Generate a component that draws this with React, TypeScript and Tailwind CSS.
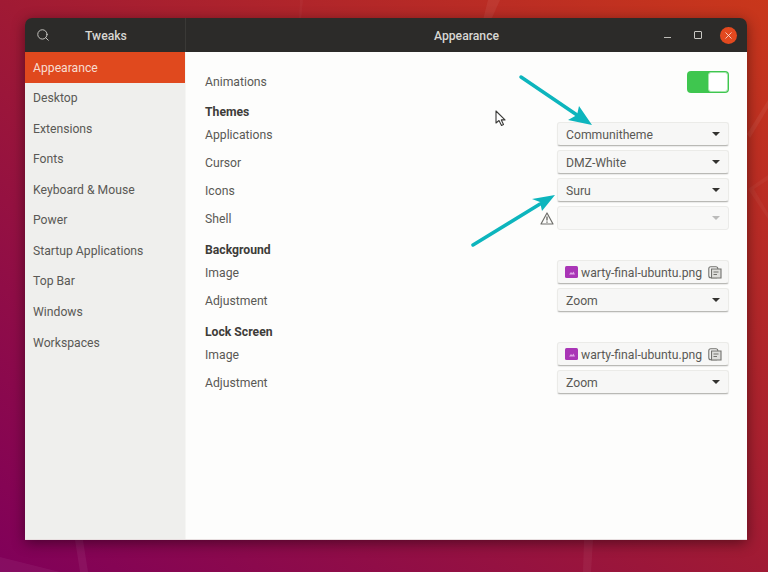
import { Search, X } from "lucide-react"

const navItems = [
  "Appearance",
  "Desktop",
  "Extensions",
  "Fonts",
  "Keyboard & Mouse",
  "Power",
  "Startup Applications",
  "Top Bar",
  "Windows",
  "Workspaces",
]

function Caret({ dim }: { dim?: boolean }) {
  return (
    <svg width="8" height="4" viewBox="0 0 8 4" className={dim ? "opacity-30" : ""}>
      <path d="M0 0h8L4 4z" fill="#33322f" />
    </svg>
  )
}

function Combo({ label, disabled }: { label?: string; disabled?: boolean }) {
  return (
    <div
      className={`flex h-6 w-[172px] items-center justify-between rounded-[3px] pl-[8px] pr-[8px] ${
        disabled
          ? "border border-[#ebebe9] bg-[#f8f8f7]"
          : "border border-[#ebebe8] border-b-[#b9b9b5] bg-[#f7f7f6] shadow-[0_1px_1px_rgba(0,0,0,0.08)]"
      }`}
    >
      <span className="pt-0.5">{label}</span>
      <Caret dim={disabled} />
    </div>
  )
}

function FileButton() {
  return (
    <div className="flex h-6 w-[172px] items-center rounded-[3px] border border-[#ebebe8] border-b-[#b9b9b5] bg-[#f7f7f6] pl-[7px] pr-[6px] shadow-[0_1px_1px_rgba(0,0,0,0.08)]">
      <svg width="13" height="12" viewBox="0 0 13 12" className="mr-[3px] shrink-0">
        <rect width="13" height="12" rx="1.5" fill="#a935b6" />
        <path d="M4 8.5l2-2.5 1.2 1.2L8.5 5.5 10 8.5z" fill="#dfa6e6" />
      </svg>
      <span className="flex-1 whitespace-nowrap pt-0.5">warty-final-ubuntu.png</span>
      <svg width="14" height="13" viewBox="0 0 14 13" fill="none" stroke="#72726e" strokeWidth="1.1" className="shrink-0">
        <rect x="0.8" y="0.8" width="9" height="11" rx="2" />
        <path d="M3.5 3h9.5v9H3.5z" fill="#dededb" />
        <path d="M5.5 6h5M5.5 8.5h3.5" />
      </svg>
    </div>
  )
}

function Row({ label, children }: { label: string; children: React.ReactNode }) {
  return (
    <div className="relative flex h-6 items-center justify-between">
      <span className="pt-0.5">{label}</span>
      {children}
    </div>
  )
}

function Section({ title, mt, children }: { title: string; mt: string; children: React.ReactNode }) {
  return (
    <div className={mt}>
      <div className="flex h-5 items-center font-bold text-[#3d3c39]">{title}</div>
      <div className="flex flex-col gap-1">{children}</div>
    </div>
  )
}

export default function App() {
  return (
    <div
      className="relative h-[572px] w-[768px] overflow-hidden bg-[linear-gradient(to_top_right,#80005a_0%,#a01a34_50%,#c9371b_100%)] pl-[25px] pt-[18px] text-[12.2px] text-[#5a5955]"
      style={{ fontFamily: 'Roboto, "Noto Sans", sans-serif' }}
    >
      {/* faint wallpaper streaks */}
      <svg width="768" height="572" viewBox="0 0 768 572" className="pointer-events-none absolute left-0 top-0">
        <path d="M488 0h12l-9 20h-8z" fill="#ffffff" opacity="0.06" />
        <path d="M300 0h3l-2 20h-2z" fill="#ffffff" opacity="0.03" />
        <path d="M768 100v8l-18 30-3-4z" fill="#ffffff" opacity="0.06" />
        <path d="M768 175l-20 14 20 30v-6l-14-24 14-9z" fill="#ffffff" opacity="0.04" />
        <path d="M75 540h8l5 32h-8z" fill="#ffffff" opacity="0.06" />
        <path d="M584 540h9l-2 32h-8z" fill="#ffffff" opacity="0.05" />
        <path d="M0 557l60 15H0z" fill="#ffffff" opacity="0.05" />
      </svg>

      <div className="relative flex h-[522px] w-[722px] flex-col overflow-hidden rounded-t-[7px] shadow-[0_3px_14px_rgba(0,0,0,0.45)]">
        <header className="flex h-[34px] shrink-0 items-center bg-[#2c2b29] text-[#d8d7d3]">
          <div className="flex h-full w-[161px] items-center border-r border-[#3a3936]">
            <Search size={14} strokeWidth={1.6} className="ml-[11px] text-[#cfcec9]" />
            <span className="ml-[35px] pt-0.5 font-medium">Tweaks</span>
          </div>
          <div className="flex-1 pl-[83px] pt-0.5 text-center font-medium">Appearance</div>
          <div className="flex items-center">
            <div className="mr-[23px] mt-[5px] h-px w-[7px] bg-[#bdbcb7]" />
            <div className="mr-[18px] h-2 w-2 rounded-[1px] border border-[#c9c8c3]" />
            <div className="mr-[10px] flex h-[17px] w-[17px] items-center justify-center rounded-full bg-[#e2491f]">
              <X size={11} strokeWidth={1.8} className="text-[#f6e2da]" />
            </div>
          </div>
        </header>
        <div className="flex min-h-0 flex-1 border-b border-[#e8dfe0]">
          <nav className="w-[161px] shrink-0 border-r border-[#f6f6f4] bg-[#efefed]">
            {navItems.map((item, i) => (
              <div
                key={item}
                className={`flex h-[30.56px] items-center pl-2 pt-px ${i === 0 ? "bg-[#e0491e] text-[#f8dcd0]" : ""}`}
              >
                {item}
              </div>
            ))}
          </nav>
          <main className="flex-1 bg-[#fdfdfc] pl-[19px] pr-[18px] pt-[19px]">
            <div className="flex h-[22px] items-center justify-between">
              <span>Animations</span>
              <div className="flex h-[22px] w-[42px] justify-end rounded-[4px] bg-[#3fc64f] p-px">
                <div className="h-5 w-[20px] rounded-[3px] border border-[#a6e6ad] bg-white" />
              </div>
            </div>
            <Section title="Themes" mt="mt-[9px]">
              <Row label="Applications">
                <Combo label="Communitheme" />
              </Row>
              <Row label="Cursor">
                <Combo label="DMZ-White" />
              </Row>
              <Row label="Icons">
                <Combo label="Suru" />
              </Row>
              <Row label="Shell">
                <svg width="14" height="13" viewBox="0 0 14 13" fill="none" className="absolute right-[175px] top-[6px]">
                  <path d="M7 1l6 11H1z" stroke="#6f6f6b" strokeWidth="1.2" strokeLinejoin="round" />
                  <path d="M7 4.5v4M7 9.5v1.2" stroke="#55554f" strokeWidth="1.2" />
                </svg>
                <Combo disabled />
              </Row>
            </Section>
            <Section title="Background" mt="mt-2.5">
              <Row label="Image">
                <FileButton />
              </Row>
              <Row label="Adjustment">
                <Combo label="Zoom" />
              </Row>
            </Section>
            <Section title="Lock Screen" mt="mt-2.5">
              <Row label="Image">
                <FileButton />
              </Row>
              <Row label="Adjustment">
                <Combo label="Zoom" />
              </Row>
            </Section>
          </main>
        </div>
      </div>

      {/* annotation arrows and mouse pointer sit on top of the screenshot */}
      <svg width="768" height="572" viewBox="0 0 768 572" fill="none" className="pointer-events-none absolute left-0 top-0">
        <path d="M521 77l56 38" stroke="#0db5bd" strokeWidth="3.5" strokeLinecap="round" />
        <path d="M592 125L579 106 577 115 568 120z" fill="#0db5bd" />
        <path d="M473 245l67-41" stroke="#0db5bd" strokeWidth="3.5" strokeLinecap="round" />
        <path d="M555 195L532 199 540 202 542 211z" fill="#0db5bd" />
        <path d="M496 111v12l3-2.5 2.5 5 2-1-2.2-4.6H505z" fill="#ffffff" stroke="#3a3a38" strokeWidth="1.1" strokeLinejoin="round" />
      </svg>
    </div>
  )
}
